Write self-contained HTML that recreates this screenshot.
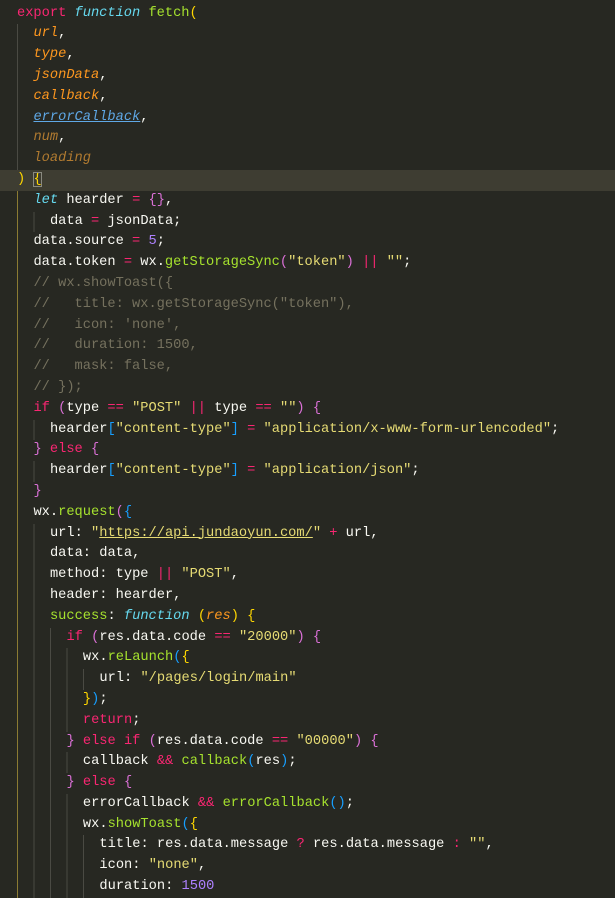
<!DOCTYPE html>
<html><head><meta charset="utf-8"><style>
html,body{margin:0;padding:0;background:#272822;width:615px;height:894px;overflow:hidden}
#c{position:absolute;left:0;top:-17.2px;width:615px;font-family:"Liberation Mono",monospace;font-size:13.7px;color:#f8f8f2}
.l{height:20.8px;line-height:20.8px;padding-left:17px;position:relative;white-space:pre}
.g{display:inline-block;height:20.8px;vertical-align:top;
background:linear-gradient(to right,var(--c1,#8b7b33) 0 1px,transparent 1px) no-repeat 0 0/16.48px 100%,repeating-linear-gradient(to right,#4a4a43 0 1px,transparent 1px 16.48px)}
.gp{--c1:#4a4a43}
.hl{background:#3e3d32}
.k{color:#f92672}.f{color:#66d9ef;font-style:italic}.fn{color:#a6e22e}.p{color:#fd971f;font-style:italic}
.pd{color:#b07a30;font-style:italic}.s{color:#e6db74}.n{color:#ae81ff}.c{color:#75715e}
.b1{color:#ffd700}.b2{color:#da70d6}.b3{color:#179fff}
.u{text-decoration:underline}
.eb{color:#5fa8e6;font-style:italic;text-decoration:underline}
.box{outline:1px solid #8a8a80;outline-offset:-1px}
</style></head><body><div id="c">
<div class="l"><span class="c">// @ts-ignore</span></div>
<div class="l"><span class="k">export</span> <span class="f">function</span> <span class="fn">fetch</span><span class="b1">(</span></div>
<div class="l"><span class="g gp" style="width:16.48px"></span><span class="p">url</span>,</div>
<div class="l"><span class="g gp" style="width:16.48px"></span><span class="p">type</span>,</div>
<div class="l"><span class="g gp" style="width:16.48px"></span><span class="p">jsonData</span>,</div>
<div class="l"><span class="g gp" style="width:16.48px"></span><span class="p">callback</span>,</div>
<div class="l"><span class="g gp" style="width:16.48px"></span><span class="eb">errorCallback</span>,</div>
<div class="l"><span class="g gp" style="width:16.48px"></span><span class="pd">num</span>,</div>
<div class="l"><span class="g gp" style="width:16.48px"></span><span class="pd">loading</span></div>
<div class="l hl"><span class="b1">)</span> <span class="b1 box">{</span></div>
<div class="l"><span class="g" style="width:16.48px"></span><span class="f">let</span> hearder <span class="k">=</span> <span class="b2">{}</span>,</div>
<div class="l"><span class="g" style="width:32.96px"></span>data <span class="k">=</span> jsonData;</div>
<div class="l"><span class="g" style="width:16.48px"></span>data.source <span class="k">=</span> <span class="n">5</span>;</div>
<div class="l"><span class="g" style="width:16.48px"></span>data.token <span class="k">=</span> wx.<span class="fn">getStorageSync</span><span class="b2">(</span><span class="s">"token"</span><span class="b2">)</span> <span class="k">||</span> <span class="s">""</span>;</div>
<div class="l"><span class="g" style="width:16.48px"></span><span class="c">// wx.showToast({</span></div>
<div class="l"><span class="g" style="width:16.48px"></span><span class="c">//   title: wx.getStorageSync("token"),</span></div>
<div class="l"><span class="g" style="width:16.48px"></span><span class="c">//   icon: 'none',</span></div>
<div class="l"><span class="g" style="width:16.48px"></span><span class="c">//   duration: 1500,</span></div>
<div class="l"><span class="g" style="width:16.48px"></span><span class="c">//   mask: false,</span></div>
<div class="l"><span class="g" style="width:16.48px"></span><span class="c">// });</span></div>
<div class="l"><span class="g" style="width:16.48px"></span><span class="k">if</span> <span class="b2">(</span>type <span class="k">==</span> <span class="s">"POST"</span> <span class="k">||</span> type <span class="k">==</span> <span class="s">""</span><span class="b2">)</span> <span class="b2">{</span></div>
<div class="l"><span class="g" style="width:32.96px"></span>hearder<span class="b3">[</span><span class="s">"content-type"</span><span class="b3">]</span> <span class="k">=</span> <span class="s">"application/x-www-form-urlencoded"</span>;</div>
<div class="l"><span class="g" style="width:16.48px"></span><span class="b2">}</span> <span class="k">else</span> <span class="b2">{</span></div>
<div class="l"><span class="g" style="width:32.96px"></span>hearder<span class="b3">[</span><span class="s">"content-type"</span><span class="b3">]</span> <span class="k">=</span> <span class="s">"application/json"</span>;</div>
<div class="l"><span class="g" style="width:16.48px"></span><span class="b2">}</span></div>
<div class="l"><span class="g" style="width:16.48px"></span>wx.<span class="fn">request</span><span class="b2">(</span><span class="b3">{</span></div>
<div class="l"><span class="g" style="width:32.96px"></span>url: <span class="s">"<span class="u">https://api.jundaoyun.com/</span>"</span> <span class="k">+</span> url,</div>
<div class="l"><span class="g" style="width:32.96px"></span>data: data,</div>
<div class="l"><span class="g" style="width:32.96px"></span>method: type <span class="k">||</span> <span class="s">"POST"</span>,</div>
<div class="l"><span class="g" style="width:32.96px"></span>header: hearder,</div>
<div class="l"><span class="g" style="width:32.96px"></span><span class="fn">success</span>: <span class="f">function</span> <span class="b1">(</span><span class="p">res</span><span class="b1">)</span> <span class="b1">{</span></div>
<div class="l"><span class="g" style="width:49.44px"></span><span class="k">if</span> <span class="b2">(</span>res.data.code <span class="k">==</span> <span class="s">"20000"</span><span class="b2">)</span> <span class="b2">{</span></div>
<div class="l"><span class="g" style="width:65.92px"></span>wx.<span class="fn">reLaunch</span><span class="b3">(</span><span class="b1">{</span></div>
<div class="l"><span class="g" style="width:82.4px"></span>url: <span class="s">"/pages/login/main"</span></div>
<div class="l"><span class="g" style="width:65.92px"></span><span class="b1">}</span><span class="b3">)</span>;</div>
<div class="l"><span class="g" style="width:65.92px"></span><span class="k">return</span>;</div>
<div class="l"><span class="g" style="width:49.44px"></span><span class="b2">}</span> <span class="k">else if</span> <span class="b2">(</span>res.data.code <span class="k">==</span> <span class="s">"00000"</span><span class="b2">)</span> <span class="b2">{</span></div>
<div class="l"><span class="g" style="width:65.92px"></span>callback <span class="k">&amp;&amp;</span> <span class="fn">callback</span><span class="b3">(</span>res<span class="b3">)</span>;</div>
<div class="l"><span class="g" style="width:49.44px"></span><span class="b2">}</span> <span class="k">else</span> <span class="b2">{</span></div>
<div class="l"><span class="g" style="width:65.92px"></span>errorCallback <span class="k">&amp;&amp;</span> <span class="fn">errorCallback</span><span class="b3">()</span>;</div>
<div class="l"><span class="g" style="width:65.92px"></span>wx.<span class="fn">showToast</span><span class="b3">(</span><span class="b1">{</span></div>
<div class="l"><span class="g" style="width:82.4px"></span>title: res.data.message <span class="k">?</span> res.data.message <span class="k">:</span> <span class="s">""</span>,</div>
<div class="l"><span class="g" style="width:82.4px"></span>icon: <span class="s">"none"</span>,</div>
<div class="l"><span class="g" style="width:82.4px"></span>duration: <span class="n">1500</span></div>
</div></body></html>
